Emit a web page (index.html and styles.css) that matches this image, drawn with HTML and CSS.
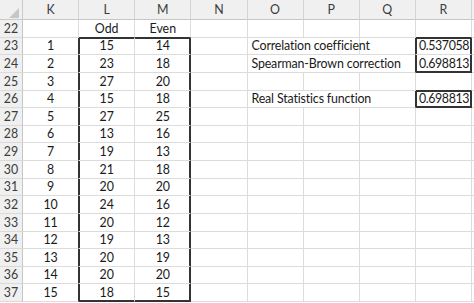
FILE: index.html
```html
<!DOCTYPE html>
<html>
<head>
<meta charset="utf-8">
<link rel="stylesheet" href="styles.css">
</head>
<body>
<div class="sheet">
  <div class="corner"><svg width="22" height="19" viewBox="0 0 22 19"><polygon points="19,8 19,18 9,18" fill="#c6c6c6"/></svg></div>
  <div class="ch">K</div><div class="ch">L</div><div class="ch">M</div><div class="ch">N</div><div class="ch">O</div><div class="ch">P</div><div class="ch">Q</div><div class="ch">R</div><div class="ch tail"></div>

  <div class="rh">22</div><div class="c"></div><div class="c ctr db">Odd</div><div class="c ctr db">Even</div><div class="c"></div><div class="c"></div><div class="c"></div><div class="c"></div><div class="c db"></div><div class="c tail"></div>

  <div class="rh">23</div><div class="c ctr dr">1</div><div class="c ctr kl kt">15</div><div class="c ctr kt kr dr">14</div><div class="c"></div><div class="c lbl span2">Correlation coefficient</div><div class="c dr"></div><div class="c rt kl kt kr dr">0.537058</div><div class="c tail"></div>

  <div class="rh">24</div><div class="c ctr dr">2</div><div class="c ctr kl">23</div><div class="c ctr kr dr">18</div><div class="c"></div><div class="c lbl span3 dr">Spearman-Brown correction</div><div class="c rt kl kr kb dr db">0.698813</div><div class="c tail"></div>

  <div class="rh">25</div><div class="c ctr dr">3</div><div class="c ctr kl">27</div><div class="c ctr kr dr">20</div><div class="c"></div><div class="c"></div><div class="c"></div><div class="c"></div><div class="c db"></div><div class="c tail"></div>

  <div class="rh">26</div><div class="c ctr dr">4</div><div class="c ctr kl">15</div><div class="c ctr kr dr">18</div><div class="c"></div><div class="c lbl span3 dr">Real Statistics function</div><div class="c rt kl kt kr kb dr db">0.698813</div><div class="c tail"></div>

  <div class="rh">27</div><div class="c ctr dr">5</div><div class="c ctr kl">27</div><div class="c ctr kr dr">25</div><div class="c"></div><div class="c"></div><div class="c"></div><div class="c"></div><div class="c"></div><div class="c tail"></div>

  <div class="rh">28</div><div class="c ctr dr">6</div><div class="c ctr kl">13</div><div class="c ctr kr dr">16</div><div class="c"></div><div class="c"></div><div class="c"></div><div class="c"></div><div class="c"></div><div class="c tail"></div>

  <div class="rh">29</div><div class="c ctr dr">7</div><div class="c ctr kl">19</div><div class="c ctr kr dr">13</div><div class="c"></div><div class="c"></div><div class="c"></div><div class="c"></div><div class="c"></div><div class="c tail"></div>

  <div class="rh">30</div><div class="c ctr dr">8</div><div class="c ctr kl">21</div><div class="c ctr kr dr">18</div><div class="c"></div><div class="c"></div><div class="c"></div><div class="c"></div><div class="c"></div><div class="c tail"></div>

  <div class="rh">31</div><div class="c ctr dr">9</div><div class="c ctr kl">20</div><div class="c ctr kr dr">20</div><div class="c"></div><div class="c"></div><div class="c"></div><div class="c"></div><div class="c"></div><div class="c tail"></div>

  <div class="rh">32</div><div class="c ctr dr">10</div><div class="c ctr kl">24</div><div class="c ctr kr dr">16</div><div class="c"></div><div class="c"></div><div class="c"></div><div class="c"></div><div class="c"></div><div class="c tail"></div>

  <div class="rh">33</div><div class="c ctr dr">11</div><div class="c ctr kl">20</div><div class="c ctr kr dr">12</div><div class="c"></div><div class="c"></div><div class="c"></div><div class="c"></div><div class="c"></div><div class="c tail"></div>

  <div class="rh">34</div><div class="c ctr dr">12</div><div class="c ctr kl">19</div><div class="c ctr kr dr">13</div><div class="c"></div><div class="c"></div><div class="c"></div><div class="c"></div><div class="c"></div><div class="c tail"></div>

  <div class="rh">35</div><div class="c ctr dr">13</div><div class="c ctr kl">20</div><div class="c ctr kr dr">19</div><div class="c"></div><div class="c"></div><div class="c"></div><div class="c"></div><div class="c"></div><div class="c tail"></div>

  <div class="rh">36</div><div class="c ctr dr">14</div><div class="c ctr kl">20</div><div class="c ctr kr dr">20</div><div class="c"></div><div class="c"></div><div class="c"></div><div class="c"></div><div class="c"></div><div class="c tail"></div>

  <div class="rh">37</div><div class="c ctr dr">15</div><div class="c ctr kl kb db">18</div><div class="c ctr kr kb dr db">15</div><div class="c"></div><div class="c"></div><div class="c"></div><div class="c"></div><div class="c"></div><div class="c tail"></div>
</div>
</body>
</html>
```
FILE: styles.css
```css
html, body {
  margin: 0;
  padding: 0;
  background: #ffffff;
}
.sheet {
  display: grid;
  grid-template-columns: 23px repeat(8, 56.125px) 1fr;
  grid-template-rows: 20px repeat(16, 17.625px);
  width: 474px;
  height: 303px;
  background: #ffffff;
  font-family: "Lato", "Open Sans", sans-serif;
  font-size: 12.4px;
  line-height: 14px;
  color: #1a1a1a;
  overflow: hidden;
}
.corner {
  background: #f0f0f0;
  border-right: 1px solid #c8c8c8;
  border-bottom: 1px solid #c8c8c8;
}
.corner svg { display: block; }
.ch {
  background: #f0f0f0;
  border-right: 1px solid #d4d4d4;
  border-bottom: 1px solid #c6c6c6;
  display: flex;
  align-items: center;
  justify-content: center;
  color: #3c3c3c;
}
.rh {
  background: #f0f0f0;
  border-right: 1px solid #c6c6c6;
  border-bottom: 1px solid #dadada;
  display: flex;
  align-items: flex-end;
  justify-content: center;
  padding-bottom: 1px;
  color: #3c3c3c;
}
.c {
  --l: 0px;
  --t: 0px;
  --r: 0px;
  --b: 0px;
  border-right: 1px solid #dcdcdc;
  border-bottom: 1px solid #dcdcdc;
  display: flex;
  align-items: flex-end;
  padding: 0 3px 1px 3px;
  white-space: nowrap;
  min-width: 0;
  box-shadow: inset var(--l) var(--t) 0 0 #333333,
              inset calc(var(--r) * -1) calc(var(--b) * -1) 0 0 #333333;
}
.kl { --l: 1px; }
.kt { --t: 1px; }
.kr { --r: 1px; }
.kb { --b: 1px; }
.dr { border-right-color: #333333; }
.db { border-bottom-color: #333333; }
.ctr { justify-content: center; }
.rt {
  justify-content: flex-end;
  padding-right: 2px;
  letter-spacing: -0.4px;
}
.lbl {
  justify-content: flex-start;
  padding-left: 4px;
  letter-spacing: -0.15px;
}
.span2 { grid-column: span 2; }
.span3 { grid-column: span 3; }
.tail { border-right: none; padding: 0; }
```
